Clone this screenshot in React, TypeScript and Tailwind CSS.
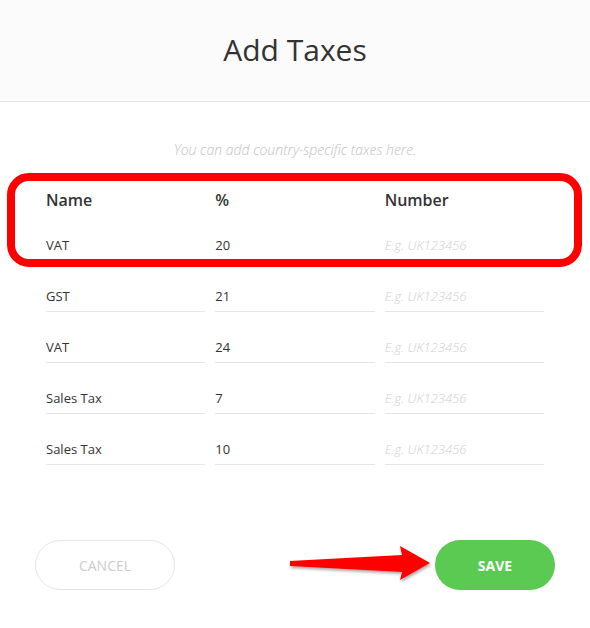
const taxes = [
  { name: "VAT", rate: "20" },
  { name: "GST", rate: "21" },
  { name: "VAT", rate: "24" },
  { name: "Sales Tax", rate: "7" },
  { name: "Sales Tax", rate: "10" },
];

function Field({ value, placeholder }: { value?: string; placeholder?: string }) {
  return (
    <div className="flex h-[29px] items-center border-b border-[#e6e6e6] text-[13px]">
      {value ? (
        <span className="text-[#333]">{value}</span>
      ) : (
        <span className="font-light italic text-[#cfcfcf]">{placeholder}</span>
      )}
    </div>
  );
}

function Arrow() {
  return (
    <svg
      className="pointer-events-none absolute left-[284px] top-[540px]"
      width="156"
      height="50"
      viewBox="284 540 156 50"
    >
      <defs>
        <filter id="shadow" x="-10%" y="-30%" width="120%" height="160%">
          <feDropShadow dx="1" dy="2" stdDeviation="1.5" floodColor="#000" floodOpacity="0.35" />
        </filter>
      </defs>
      <polygon
        points="290,561 402,555 400,546 430,563 400,580 402,572 290,566"
        fill="#ff0000"
        filter="url(#shadow)"
      />
    </svg>
  );
}

export default function App() {
  return (
    <div
      className="relative h-[628px] w-[590px] overflow-hidden bg-white"
      style={{ fontFamily: '"Open Sans", "Noto Sans", sans-serif' }}
    >
      <div className="flex h-[102px] items-center justify-center border-b border-[#e5e5e5] bg-[#fbfbfb]">
        <h1 className="text-[30px] font-normal text-[#333] leading-none -mt-[2px]">Add Taxes</h1>
      </div>

      <p className="mt-[38px] text-center text-[14px] font-light italic leading-[20px] text-[#c2c2c2]">
        You can add country-specific taxes here.
      </p>

      <div className="relative mx-[46px] mt-[29px]">
        <div className="pointer-events-none absolute -left-[39px] -right-[38px] -top-[16px] h-[94px] rounded-[22px] border-[8px] border-[#ff0000]" />
        <div className="grid grid-cols-3 gap-x-[10px] text-[16px] font-semibold leading-[22px] text-[#333]">
          <span>Name</span>
          <span>%</span>
          <span>Number</span>
        </div>
        <div className="mt-[21px] flex flex-col gap-[22px]">
          {taxes.map((tax, i) => (
            <div key={i} className="grid grid-cols-3 gap-x-[10px]">
              <Field value={tax.name} />
              <Field value={tax.rate} />
              <Field placeholder="E.g. UK123456" />
            </div>
          ))}
        </div>
      </div>

      <div className="mt-[75px] flex items-center justify-between pl-[35px] pr-[35px]">
        <button className="h-[50px] w-[140px] rounded-full border border-[#e6e6e6] bg-white text-[14px] uppercase text-[#cccccc]">
          Cancel
        </button>
        <button className="h-[50px] w-[120px] rounded-full bg-[#5aca52] text-[14px] font-bold uppercase text-white">
          Save
        </button>
      </div>

      <Arrow />
    </div>
  );
}
